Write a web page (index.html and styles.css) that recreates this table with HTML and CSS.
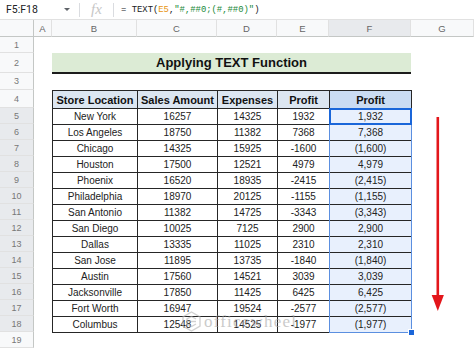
FILE: index.html
```html
<!DOCTYPE html>
<html lang="en">

<head>
    <meta charset="utf-8">
    <title>Applying TEXT Function</title>
    <link rel="stylesheet" href="styles.css">
</head>

<body>
    <div class="page">

        <div class="formula-bar">
            <div class="name-box">F5:F18<span class="caret"></span></div>
            <span class="sep"></span>
            <div class="fx">fx</div>
            <span class="sep"></span>
            <div class="formula">= TEXT(<span class="ref">E5</span>,<span class="str">"#,##0;(#,##0)"</span>)</div>
        </div>

        <div class="sheet">
            <!-- kolonne overskrifter -->
            <div class="corner"></div>
            <div class="colhead">A</div>
            <div class="colhead">B</div>
            <div class="colhead">C</div>
            <div class="colhead">D</div>
            <div class="colhead">E</div>
            <div class="colhead valgt">F</div>
            <div class="colhead">G</div>

            <!-- række numre -->
            <div class="rowhead r1">1</div>
            <div class="rowhead r2">2</div>
            <div class="rowhead r3">3</div>
            <div class="rowhead r4">4</div>
            <div class="rowhead r5 valgt">5</div>
            <div class="rowhead r6 valgt">6</div>
            <div class="rowhead r7 valgt">7</div>
            <div class="rowhead r8 valgt">8</div>
            <div class="rowhead r9 valgt">9</div>
            <div class="rowhead r10 valgt">10</div>
            <div class="rowhead r11 valgt">11</div>
            <div class="rowhead r12 valgt">12</div>
            <div class="rowhead r13 valgt">13</div>
            <div class="rowhead r14 valgt">14</div>
            <div class="rowhead r15 valgt">15</div>
            <div class="rowhead r16 valgt">16</div>
            <div class="rowhead r17 valgt">17</div>
            <div class="rowhead r18 valgt">18</div>
            <div class="rowhead r19">19</div>

            <div class="title">Applying TEXT Function</div>

            <div class="data-table">
                <div class="th">Store Location</div>
                <div class="th">Sales Amount</div>
                <div class="th">Expenses</div>
                <div class="th">Profit</div>
                <div class="th th-sel">Profit</div>

                <div>New York</div><div>16257</div><div>14325</div><div>1932</div><div class="sel">1,932</div>
                <div>Los Angeles</div><div>18750</div><div>11382</div><div>7368</div><div class="sel">7,368</div>
                <div>Chicago</div><div>14325</div><div>15925</div><div>-1600</div><div class="sel">(1,600)</div>
                <div>Houston</div><div>17500</div><div>12521</div><div>4979</div><div class="sel">4,979</div>
                <div>Phoenix</div><div>16520</div><div>18935</div><div>-2415</div><div class="sel">(2,415)</div>
                <div>Philadelphia</div><div>18970</div><div>20125</div><div>-1155</div><div class="sel">(1,155)</div>
                <div>San Antonio</div><div>11382</div><div>14725</div><div>-3343</div><div class="sel">(3,343)</div>
                <div>San Diego</div><div>10025</div><div>7125</div><div>2900</div><div class="sel">2,900</div>
                <div>Dallas</div><div>13335</div><div>11025</div><div>2310</div><div class="sel">2,310</div>
                <div>San Jose</div><div>11895</div><div>13735</div><div>-1840</div><div class="sel">(1,840)</div>
                <div>Austin</div><div>17560</div><div>14521</div><div>3039</div><div class="sel">3,039</div>
                <div>Jacksonville</div><div>17850</div><div>11425</div><div>6425</div><div class="sel">6,425</div>
                <div>Fort Worth</div><div>16947</div><div>19524</div><div>-2577</div><div class="sel">(2,577)</div>
                <div>Columbus</div><div>12548</div><div>14525</div><div>-1977</div><div class="sel">(1,977)</div>

                <span class="selection"></span>
                <span class="active-cell"></span>
                <span class="fill-handle"></span>
            </div>
        </div>

        <svg class="arrow" width="20" height="202" viewBox="0 0 20 202">
            <line x1="9.8" y1="5" x2="9.8" y2="186" stroke="#e3161b" stroke-width="2.6" />
            <polygon points="3.7,183 15.9,183 9.8,199" fill="#e3161b" />
        </svg>

        <div class="watermark">
            <svg width="19" height="21" viewBox="0 0 19 21">
                <polygon points="9.5,1 18,5.8 18,15.2 9.5,20 1,15.2 1,5.8" fill="none" stroke="#b4b4b4" stroke-width="1.4" />
                <polyline points="14,8 9.5,5.5 5,8 5,13 9.5,15.5 14,13" fill="none" stroke="#b4b4b4" stroke-width="1.4" />
                <line x1="5" y1="10.5" x2="14" y2="10.5" stroke="#b4b4b4" stroke-width="1.4" />
            </svg>
            <span>officewheel</span>
        </div>

    </div>
</body>

</html>
```

FILE: styles.css
```css
body {
    margin: 0;
    background-color: white;
    font-family: 'Liberation Sans', Arial, sans-serif;
}

.page {
    position: relative;
    width: 474px;
    height: 348px;
    overflow: hidden;
}

/* formel linjen */

.formula-bar {
    display: flex;
    align-items: center;
    height: 19px;
    border-bottom: 1px solid #e1e1e1;
    font-family: Roboto, 'Liberation Sans', sans-serif;
    color: #202124;
}

.name-box {
    display: flex;
    align-items: center;
    width: 73px;
    padding-left: 6px;
    font-size: 10.5px;
}

.caret {
    margin-left: 26px;
    border-left: 3px solid transparent;
    border-right: 3px solid transparent;
    border-top: 3px solid #5f6368;
}

.sep {
    width: 1px;
    height: 14px;
    background-color: #dadce0;
}

.fx {
    width: 33px;
    text-align: center;
    font-family: 'Liberation Serif', serif;
    font-style: italic;
    font-size: 15px;
    color: #c6c6c6;
    line-height: 19px;
}

.formula {
    padding-left: 7px;
    font-family: 'Liberation Mono', monospace;
    font-size: 8.9px;
    color: #202124;
}

.ref {
    color: #e8950f;
}

.str {
    color: #1a8a3a;
}

/* regnearket */

.sheet {
    display: grid;
    grid-template-columns: 34px 18px 85px 80px 60px 52px 82px 63px;
    grid-template-rows: 17px 16px 20px 17px 18px repeat(14, 16px) 16px;
}

.corner {
    background-color: #f8f9fa;
    border-right: 1px solid #c4c7c5;
    border-bottom: 1px solid #c4c7c5;
}

.colhead {
    display: flex;
    align-items: center;
    justify-content: center;
    background-color: #f8f9fa;
    border-right: 1px solid #e1e1e1;
    border-bottom: 1px solid #c4c7c5;
    font-size: 9.5px;
    color: #666;
}

.rowhead {
    grid-column: 1;
    display: flex;
    align-items: center;
    justify-content: center;
    background-color: #f8f9fa;
    border-right: 1px solid #c4c7c5;
    border-bottom: 1px solid #e1e1e1;
    font-size: 9px;
    color: #777;
}

.colhead.valgt,
.rowhead.valgt {
    background-color: #e8eaed;
}

.title {
    grid-column: 3 / 8;
    grid-row: 3;
    height: 21px;
    box-sizing: border-box;
    display: flex;
    align-items: center;
    justify-content: center;
    background-color: #dcebd5;
    border-bottom: 2px solid #1c1c1c;
    font-size: 13px;
    font-weight: 700;
    color: #111;
}

.data-table {
    grid-column: 3 / 8;
    grid-row: 5 / 20;
    align-self: start;
    justify-self: start;
    position: relative;
    display: grid;
    grid-template-columns: 84px 79px 59px 51px 81px;
    grid-template-rows: 17px repeat(14, 15px);
    gap: 1px;
    padding: 1px;
    background-color: #262626;
}

.data-table div {
    display: flex;
    align-items: center;
    justify-content: center;
    background-color: white;
    font-size: 10px;
    color: #222;
}

.data-table .th {
    background-color: #dce6f1;
    font-size: 11px;
    font-weight: 700;
    color: #111;
}

.data-table .th-sel {
    background-color: #cadcf3;
}

.data-table .sel {
    background-color: #e8f0fd;
}

.selection {
    position: absolute;
    left: 277px;
    top: 18px;
    width: 83px;
    height: 225px;
    box-sizing: border-box;
    border: 1px solid #5b8fe0;
}

.active-cell {
    position: absolute;
    left: 277px;
    top: 18px;
    width: 83px;
    height: 17px;
    box-sizing: border-box;
    border: 2px solid #1a66d9;
}

.fill-handle {
    position: absolute;
    left: 356px;
    top: 239px;
    width: 5px;
    height: 5px;
    background-color: #1a66d9;
    border: 1px solid white;
}

/* pil og vandmærke */

.arrow {
    position: absolute;
    left: 428px;
    top: 112px;
}

.watermark {
    position: absolute;
    left: 182px;
    top: 311px;
    display: flex;
    align-items: center;
    gap: 3px;
    opacity: 0.6;
}

.watermark span {
    font-family: 'Liberation Serif', serif;
    font-size: 17px;
    letter-spacing: 1.2px;
    color: #a8a8a8;
}
```
